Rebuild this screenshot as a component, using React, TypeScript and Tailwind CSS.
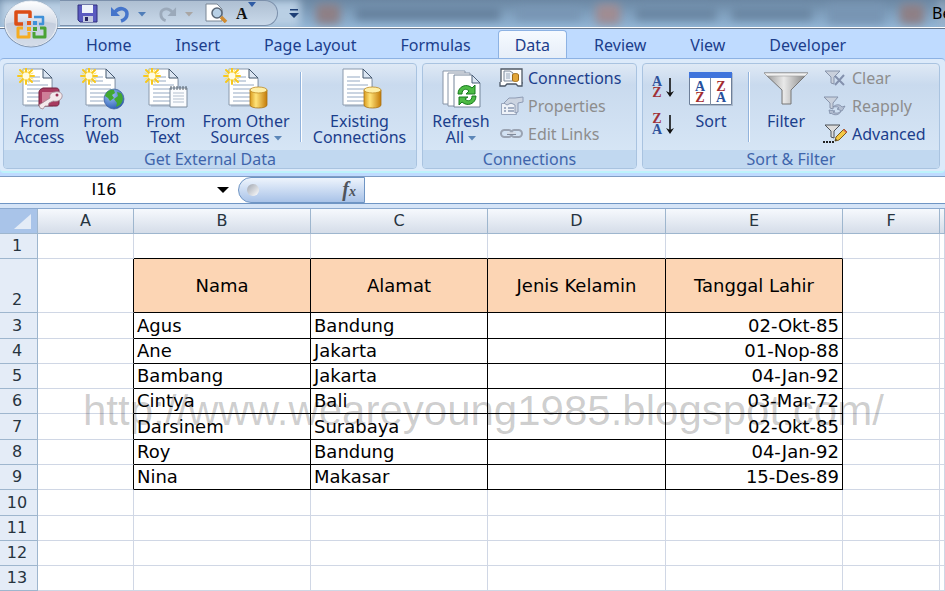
import { useState, type ReactNode } from "react";

const tabs = ["Home", "Insert", "Page Layout", "Formulas", "Data", "Review", "View", "Developer"];

const columns = [
  { name: "A", width: "w-24" },
  { name: "B", width: "w-[177px]" },
  { name: "C", width: "w-[177px]" },
  { name: "D", width: "w-[178px]" },
  { name: "E", width: "w-[177px]" },
  { name: "F", width: "w-[97px]" },
  { name: "", width: "" },
];

const headings = ["Nama", "Alamat", "Jenis Kelamin", "Tanggal Lahir"];

const people = [
  ["Agus", "Bandung", "", "02-Okt-85"],
  ["Ane", "Jakarta", "", "01-Nop-88"],
  ["Bambang", "Jakarta", "", "04-Jan-92"],
  ["Cintya", "Bali", "", "03-Mar-72"],
  ["Darsinem", "Surabaya", "", "02-Okt-85"],
  ["Roy", "Bandung", "", "04-Jan-92"],
  ["Nina", "Makasar", "", "15-Des-89"],
];

// row heights in pixels, the first entry is row 1
const rowHeights = [25, 54, 26, 25, 25, 25, 26, 25, 25, 26, 25, 25, 25];

function cellText(row: number, col: number) {
  if (col < 1 || col > 4) return "";
  if (row === 2) return headings[col - 1];
  return people[row - 3]?.[col - 1] ?? "";
}

function cellClass(row: number, col: number) {
  const inCols = col >= 1 && col <= 4;
  const inRows = row >= 2 && row <= 9;
  const right = inRows && col <= 4 ? "border-r-black" : "border-r-[#d0d7e5]";
  const bottom = inCols && row <= 9 ? "border-b-black" : "border-b-[#d0d7e5]";
  let look = "text-left";
  if (row === 2 && inCols) look = "bg-[#fcd5b4] text-center";
  else if (col === 4) look = "text-right";
  return `overflow-hidden whitespace-nowrap border-r border-b px-[3px] py-0 ${right} ${bottom} ${look}`;
}

function Caret({ color = "#5b86b8" }: { color?: string }) {
  return (
    <svg width="8" height="5" viewBox="0 0 8 5" className="inline-block">
      <path d="M0 0h8L4 4.5z" fill={color} />
    </svg>
  );
}

function Page() {
  return (
    <g>
      <path d="M7 2h19l9 9v27H7z" fill="#8a97a8" opacity=".35" transform="translate(1 1)" />
      <path d="M6 1h20l9 9v27H6z" fill="#fff" stroke="#8b9aad" />
      <path d="M26 1v9h9z" fill="#dce6f2" stroke="#45586f" strokeLinejoin="round" />
      <path d="M10 9h13M10 13h13M10 17h21M10 21h21M10 25h21M10 29h21M10 33h21" stroke="#b9c6d8" strokeWidth="1.3" />
    </g>
  );
}

function Spark() {
  return (
    <g strokeLinecap="round">
      <path d="M9 0v16M1 8h16M3 2l12 12M15 2L3 14" stroke="#f8c81c" strokeWidth="2" />
      <path d="M6 1l6 14M12 1L6 15M2 5l14 6M16 5L2 11" stroke="#fbe26a" strokeWidth="1" />
      <circle cx="9" cy="8" r="3.4" fill="#fffbe0" />
    </g>
  );
}

function Cylinder() {
  return (
    <g>
      <path d="M27 22v15c0 4 17 4 17 0V22z" fill="url(#gold)" stroke="#a8741a" strokeWidth=".8" />
      <ellipse cx="35.500" cy="22" rx="8.500" ry="3" fill="#fff0a8" stroke="#c08c22" strokeWidth=".8" />
    </g>
  );
}

function BigIcon({ children }: { children: ReactNode }) {
  return (
    <svg width="46" height="42" viewBox="0 0 46 42" className="shrink-0">
      {children}
    </svg>
  );
}

function AccessIcon() {
  return (
    <BigIcon>
      <Page />
      <Spark />
      <path d="M22 24c0-2 2-3 4-4h13c2 0 3 1 3 3v12c0 2-1 3-3 3H22z" fill="#a83a60" stroke="#74203d" />
      <path d="M25 24h11v10H25z" fill="#cf7f98" />
      <path d="M22 37l1 3 3 1 2-3 3 0 1-3 4-2c5 1 8-1 9-4 1-4-3-6-7-5-4 0-6 3-5 6z" fill="#f4e9ec" stroke="#a08790" strokeWidth=".8" />
      <circle cx="40" cy="27" r="1.500" fill="#9b2f55" />
    </BigIcon>
  );
}

function WebIcon() {
  return (
    <BigIcon>
      <Page />
      <Spark />
      <circle cx="34" cy="31" r="10" fill="url(#globe)" stroke="#3c5f9c" strokeWidth=".7" />
      <path d="M25 28c1-4 5-7 9-6l1 3-3 2 2 3-4 3-2-3zM34 31l4-3-1-4 4 1c3 4 2 9-1 12l-4 2 1-4z" fill="#42a832" />
    </BigIcon>
  );
}

function TextIcon() {
  return (
    <BigIcon>
      <Page />
      <Spark />
      <path d="M27 20h17v19H27z" fill="#fbfcfe" stroke="#7d8c9e" />
      <path d="M28 18v4M31 18v4M34 18v4M37 18v4M40 18v4M43 18v4" stroke="#55606c" />
      <path d="M30 25h11M30 28h11M30 31h11M30 34h11" stroke="#b3bfce" />
    </BigIcon>
  );
}

function OtherIcon() {
  return (
    <BigIcon>
      <Page />
      <Spark />
      <Cylinder />
    </BigIcon>
  );
}

function ExistingIcon() {
  return (
    <BigIcon>
      <Page />
      <Cylinder />
    </BigIcon>
  );
}

function RefreshIcon() {
  return (
    <BigIcon>
      <path d="M5 3h22v33H5z" fill="#fff" stroke="#8794a6" />
      <path d="M10 5h22v33H10z" fill="#fff" stroke="#8794a6" />
      <path d="M16 7h18l8 8v24H16z" fill="#fff" stroke="#74859a" />
      <path d="M34 7v8h8z" fill="#dce6f2" stroke="#4b5f78" />
      <path d="M20 26c0-8 9-11 14-6l3-3v9h-9l3-3c-3-3-7-2-7 3z" fill="#4dbb44" stroke="#167a1d" />
      <path d="M38 28c0 8-9 11-14 6l-3 3v-8h9l-3 2c3 3 7 2 7-3z" fill="#4dbb44" stroke="#167a1d" />
    </BigIcon>
  );
}

function SortDialogIcon() {
  return (
    <BigIcon>
      <path d="M2 5h43v33H2z" fill="#8b98a8" opacity=".5" />
      <path d="M1.500 4.500h42v32h-42z" fill="#fff" stroke="#6d7f99" />
      <path d="M1 4h43v6H1z" fill="#3f74dc" />
      <path d="M22.500 10v27" stroke="#7f8da1" />
      <g fontFamily="Liberation Serif, serif" fontSize="14" fontWeight="bold" textAnchor="middle">
        <text x="12" y="23" fill="#27509c">A</text>
        <text x="12" y="34" fill="#a32c30">Z</text>
        <text x="33" y="23" fill="#a32c30">Z</text>
        <text x="33" y="34" fill="#27509c">A</text>
      </g>
    </BigIcon>
  );
}

function FilterIcon() {
  return (
    <BigIcon>
      <path d="M1 5h44L28 22v14h-9V22z" fill="url(#metal)" stroke="#777" />
      <path d="M1 5h44l-3 3H4z" fill="#f1f1f1" stroke="#9b9b9b" strokeWidth=".6" />
    </BigIcon>
  );
}

function SortOrderIcon({ first, second }: { first: string; second: string }) {
  const color = (letter: string) => (letter === "A" ? "#2f529b" : "#a03038");
  return (
    <svg width="24" height="25" viewBox="0 0 24 25">
      <g fontFamily="Liberation Serif, serif" fontSize="14" fontWeight="bold" textAnchor="middle">
        <text x="6" y="11" fill={color(first)}>{first}</text>
        <text x="6" y="22" fill={color(second)}>{second}</text>
      </g>
      <path d="M19 3v16" stroke="#111" strokeWidth="1.600" />
      <path d="M15 16l4 6 4-6-4 2z" fill="#111" />
    </svg>
  );
}

function SmallIcon({ children }: { children: ReactNode }) {
  return (
    <svg width="25" height="20" viewBox="0 0 25 20" className="shrink-0">
      {children}
    </svg>
  );
}

function ConnectionsIcon() {
  return (
    <SmallIcon>
      <path d="M2 1h21v14H2z" fill="#fff" stroke="#4f5864" strokeWidth="1.300" />
      <path d="M5 3h6l3 2v8H5z" fill="#f1f5fa" stroke="#7b8797" />
      <path d="M7 6h4M7 8h4M7 10h4" stroke="#97a7ba" />
      <path d="M13.500 7v5c0 2 6 2 6 0V7c0-2-6-2-6 0z" fill="#e2a63a" stroke="#9b6a1a" />
      <path d="M1 14v4h5l2-2h9l2 2h4v-4" fill="#fff" stroke="#4b5766" strokeWidth="1.300" />
    </SmallIcon>
  );
}

function PropertiesIcon() {
  return (
    <SmallIcon>
      <path d="M2.500 7.500h15v11h-15z" fill="#eef2f8" stroke="#9aa7bd" />
      <path d="M5 12h2M5 15h2M9 12h6M9 15h6" stroke="#8b99b3" strokeWidth="1.500" />
      <path d="M5 7l5-5h6l8-1v5l-5 1v9l-3 1V9l-4-2-4 2z" fill="#ccd4e1" stroke="#8f9cb4" />
    </SmallIcon>
  );
}

function LinksIcon() {
  return (
    <SmallIcon>
      <g fill="none" stroke="#9aa3b2" strokeWidth="2">
        <rect x="2" y="6" width="11" height="7" rx="3.500" />
        <rect x="12" y="6" width="11" height="7" rx="3.500" />
      </g>
      <path d="M8 9.500h9" stroke="#d5dbe5" strokeWidth="2.400" />
      <path d="M8 10.500h9" stroke="#808b9d" />
    </SmallIcon>
  );
}

function ClearIcon() {
  return (
    <SmallIcon>
      <path d="M2 3h15l-6 6v7l-3-1V9z" fill="#c9d0dc" stroke="#8793aa" />
      <path d="M12 8l9 9M21 7l-9 10" stroke="#8491ad" strokeWidth="2" />
    </SmallIcon>
  );
}

function ReapplyIcon() {
  return (
    <SmallIcon>
      <path d="M1 1h14l-5 6v6l-3-1V7z" fill="#c9d0dc" stroke="#8793aa" />
      <path d="M10 11c3-3 7-3 9 0l3-1-3 5-5-2 2-1c-2-2-4-1-6-1zM6 14l6 1-2 1c3 2 6 1 8-1-1 4-7 5-10 2l-1 1z" fill="#b4bfd2" stroke="#7e8ba6" strokeWidth=".8" />
    </SmallIcon>
  );
}

function AdvancedIcon() {
  return (
    <SmallIcon>
      <path d="M2 1h15l-6 6v7l-3-1V7z" fill="#dcdcdc" stroke="#4d5258" />
      <path d="M0 18h12" stroke="#222" strokeWidth="2" strokeDasharray="2 1" />
      <path d="M12 17l1-4 8-8 3 3-8 8z" fill="#f3c845" stroke="#7c5b19" />
      <path d="M20 6l1-1 3 3-1 1z" fill="#d7634f" />
      <path d="M12 17l1-2 1 1z" fill="#222" />
    </SmallIcon>
  );
}

function BigButton({ icon, top, bottom, caret, width }: { icon: ReactNode; top: string; bottom?: string; caret?: boolean; width: string }) {
  return (
    <button className={`flex flex-col items-center gap-[3px] pt-1 text-[#1b3e8c] ${width}`}>
      {icon}
      <span className="text-center leading-4 whitespace-nowrap">
        {top}
        {bottom && <br />}
        {bottom}
        {caret && (
          <span className="ml-1 inline-flex align-middle">
            <Caret />
          </span>
        )}
      </span>
    </button>
  );
}

function SmallButton({ icon, label, disabled }: { icon: ReactNode; label: string; disabled?: boolean }) {
  return (
    <button
      disabled={disabled}
      className="flex h-7 items-center gap-1 whitespace-nowrap text-[#1b3e8c] disabled:text-[#8d8d8d]"
    >
      {icon}
      {label}
    </button>
  );
}

function Divider() {
  return <div className="mx-[5px] my-2 w-[2px] border-r border-r-white bg-[#92b3dc]" />;
}

function Group({ title, children }: { title: string; children: ReactNode }) {
  return (
    <section className="flex shrink-0 flex-col overflow-hidden rounded border border-[#a9c3e0] bg-linear-to-b from-[#dfe9f5] via-[#c9daee] via-20% to-[#d9e8f7]">
      <div className="flex h-[86px] px-1">{children}</div>
      <h2 className="h-[18px] bg-[#c1d8f0] text-center leading-[18px] text-[#3f65ab]">{title}</h2>
    </section>
  );
}

function OfficeButton() {
  return (
    <button aria-label="Office Button" className="absolute top-0 left-1 z-10">
      <svg width="55" height="48" viewBox="0 0 55 48">
        <ellipse cx="27" cy="24" rx="27" ry="23.500" fill="#67788f" opacity=".7" />
        <ellipse cx="27" cy="23.500" rx="26" ry="22.500" fill="url(#orb)" stroke="#eef3f9" />
        <path d="M2 24c10-4 40-4 50 0-1 13-12 22-25 22S3 37 2 24z" fill="#b5c2d6" opacity=".5" />
        <g fill="none" strokeLinejoin="round">
          <path d="M26 18v-6H12v12h7" stroke="#dc4e16" strokeWidth="3.500" />
          <path d="M30 17h9v7h-4" stroke="#3f91d8" strokeWidth="2.500" />
          <path d="M19 28h-5v9h11v-5" stroke="#f5ac21" strokeWidth="3" />
          <path d="M30 32v5h11v-9h-5" stroke="#4ba335" strokeWidth="3" />
        </g>
        <path d="M23 21h4v4h-4z" fill="#e3581d" />
        <path d="M29 21h4v4h-4z" fill="#3f91d8" />
        <path d="M23 27h4v4h-4z" fill="#f5ac21" />
        <path d="M29 27h4v4h-4z" fill="#4ba335" />
      </svg>
    </button>
  );
}

function QuickAccess() {
  return (
    <div className="ml-[60px] flex h-[26px] w-[218px] shrink-0 items-center rounded-r-full border border-l-0 border-[#7c90ab] bg-linear-to-b from-[#aebfd2] to-[#c9d9ea] pl-[17px]">
      <button aria-label="Save">
        <svg width="21" height="20" viewBox="0 0 21 20">
          <path d="M1 2h19v17H3l-2-2z" fill="#5a5ac0" stroke="#30307f" />
          <path d="M5 2h11v8H5z" fill="#eef3fb" />
          <path d="M6 13h10v6H6z" fill="#c4cbe0" />
          <path d="M8 14h3v4H8z" fill="#262660" />
        </svg>
      </button>
      <button aria-label="Undo" className="ml-3">
        <svg width="20" height="19" viewBox="0 0 20 19">
          <path d="M5 8c5-6 12-3 12 2 0 4-3 6-6 7" fill="none" stroke="#4575cb" strokeWidth="3.500" />
          <path d="M1 3v9h9z" fill="#4575cb" />
        </svg>
      </button>
      <button aria-label="Undo list" className="ml-2">
        <Caret color="#4f7db8" />
      </button>
      <button aria-label="Redo" className="ml-3" disabled>
        <svg width="19" height="19" viewBox="0 0 20 19">
          <path d="M15 8C10 2 3 5 3 10c0 4 2 6 5 7" fill="none" stroke="#9ba9ba" strokeWidth="3" />
          <path d="M19 3v9h-9z" fill="#9ba9ba" />
        </svg>
      </button>
      <button aria-label="Redo list" className="ml-2" disabled>
        <Caret color="#a9a6a4" />
      </button>
      <button aria-label="Print Preview" className="ml-3">
        <svg width="23" height="20" viewBox="0 0 23 20">
          <path d="M1 1h11l5 5v12H1z" fill="#fff" stroke="#7b8795" />
          <circle cx="12" cy="10" r="5" fill="#b7d0e6" stroke="#596676" strokeWidth="1.500" />
          <path d="M16 14l5 5" stroke="#cf8b31" strokeWidth="3.500" />
        </svg>
      </button>
      <button aria-label="Shrink Font" className="ml-2 flex items-start font-['Liberation_Serif',serif] font-bold text-[#111]">
        <span className="pt-[2px]">A</span>
        <svg width="8" height="7" viewBox="0 0 8 7">
          <path d="M0 2h8L4 7z" fill="#2f5ba4" />
        </svg>
      </button>
    </div>
  );
}

function TitleBar() {
  return (
    <header className="relative flex h-7 items-start overflow-hidden border-b border-b-white bg-linear-to-b from-[#6c88a4] to-[#92b5d5]">
      <div className="absolute inset-0 flex items-center gap-4 blur-[4px]">
        <div className="h-full w-[300px] bg-[#b9cfe4]" />
        <div className="h-5 w-6 rounded bg-[#8e7f85]" />
        <div className="h-3 w-36 bg-[#65809c]" />
        <div className="h-3 w-16 bg-[#7895b3]" />
        <div className="h-5 w-6 rounded bg-[#a08c92]" />
        <div className="h-3 w-20 bg-[#6985a1]" />
        <div className="h-3 w-20 bg-[#6985a1]" />
        <div className="h-5 w-14 bg-[#7895b3]" />
        <div className="h-5 w-6 rounded bg-[#8e7f85]" />
        <div className="h-full flex-1 bg-[#a9b8c9]" />
      </div>
      <div className="relative flex min-w-0 flex-1">
        <QuickAccess />
        <button aria-label="Customize Quick Access Toolbar" className="ml-[11px]">
          <svg width="10" height="9" viewBox="0 0 10 9">
            <path d="M1 0h8v1.500H1zM0 4h10L5 9z" fill="#1f4076" />
          </svg>
        </button>
      </div>
      <h1 className="relative w-[13px] overflow-hidden leading-[26px] text-black">Be</h1>
    </header>
  );
}

function Ribbon() {
  const [active, setActive] = useState("Data");

  return (
    <div className="border-b border-b-[#7f9dc4] bg-[#bfdbff] pb-[3px]">
      <nav className="flex h-[30px] items-end gap-[10px] border-t border-t-[#66788f] pl-[69px]">
        {tabs.map((tab) => (
          <button
            key={tab}
            onClick={() => setActive(tab)}
            className={`h-7 rounded-t border border-b-0 px-4 whitespace-nowrap text-[#1b3e8c] ${
              tab === active ? "border-[#8db2e3] bg-linear-to-b from-[#f6faff] to-[#e6eef8]" : "border-transparent"
            }`}
          >
            {tab}
          </button>
        ))}
      </nav>
      <div className="flex gap-[5px] overflow-hidden rounded border-t border-b-2 border-t-[#8db2e3] border-b-[#bdf3fb] bg-[#dceafa] px-[3px] pt-1 pb-[2px]">
        <Group title="Get External Data">
          <BigButton icon={<AccessIcon />} top="From" bottom="Access" width="w-[63px]" />
          <BigButton icon={<WebIcon />} top="From" bottom="Web" width="w-[63px]" />
          <BigButton icon={<TextIcon />} top="From" bottom="Text" width="w-[63px]" />
          <BigButton icon={<OtherIcon />} top="From Other" bottom="Sources" caret width="w-[98px]" />
          <Divider />
          <BigButton icon={<ExistingIcon />} top="Existing" bottom="Connections" width="w-[105px]" />
        </Group>
        <Group title="Connections">
          <BigButton icon={<RefreshIcon />} top="Refresh" bottom="All" caret width="w-[68px]" />
          <div className="flex w-[137px] flex-col pl-1">
            <SmallButton icon={<ConnectionsIcon />} label="Connections" />
            <SmallButton icon={<PropertiesIcon />} label="Properties" disabled />
            <SmallButton icon={<LinksIcon />} label="Edit Links" disabled />
          </div>
        </Group>
        <Group title="Sort & Filter">
          <div className="flex w-8 flex-col items-center gap-3 pt-[11px]">
            <button aria-label="Sort A to Z">
              <SortOrderIcon first="A" second="Z" />
            </button>
            <button aria-label="Sort Z to A">
              <SortOrderIcon first="Z" second="A" />
            </button>
          </div>
          <BigButton icon={<SortDialogIcon />} top="Sort" width="w-16" />
          <Divider />
          <BigButton icon={<FilterIcon />} top="Filter" width="w-[62px]" />
          <div className="flex w-[118px] flex-col pl-[6px]">
            <SmallButton icon={<ClearIcon />} label="Clear" disabled />
            <SmallButton icon={<ReapplyIcon />} label="Reapply" disabled />
            <SmallButton icon={<AdvancedIcon />} label="Advanced" />
          </div>
        </Group>
        <div className="flex-1 rounded-l border border-r-0 border-[#a9c3e0] bg-[#d2e1f2]" />
      </div>
    </div>
  );
}

function FormulaBar() {
  return (
    <div className="flex h-[27px] border-b border-b-[#6f95c4] bg-white font-['DejaVu_Sans',sans-serif] text-base">
      <input aria-label="Name Box" defaultValue="I16" className="w-[208px] text-center text-black outline-none" />
      <button aria-label="Name list" className="flex w-[30px] items-center justify-center">
        <svg width="12" height="6" viewBox="0 0 12 6">
          <path d="M0 0h12L6 6z" fill="#000" />
        </svg>
      </button>
      <div className="flex w-[127px] items-center justify-between rounded-l-full border border-[#6f95c4] bg-linear-to-b from-[#eef4fc] to-[#a9c3e8] pr-2 pl-2">
        <span className="size-3 rounded-full bg-linear-to-br from-[#a0a6b0] to-white" />
        <button aria-label="Insert Function" className="font-['Liberation_Serif',serif] text-xl leading-5 font-bold text-[#4f545c] italic">
          f<span className="text-sm">x</span>
        </button>
      </div>
      <input aria-label="Formula" className="min-w-0 flex-1 px-1 outline-none" />
    </div>
  );
}

function Sheet() {
  return (
    <main className="relative overflow-hidden border-t border-t-[#8ba9cf] font-['DejaVu_Sans',sans-serif] text-lg leading-6 text-black">
      <table className="w-full table-fixed border-separate border-spacing-0">
        <colgroup>
          <col className="w-[38px]" />
          {columns.map((col, i) => (
            <col key={i} className={col.width} />
          ))}
        </colgroup>
        <thead>
          <tr className="h-[25px] text-base">
            <th className="border-r border-b border-[#9eb6ce] bg-[#a9c4e9] p-0">
              <button aria-label="Select All" className="flex h-6 w-full items-end justify-end pr-[6px] pb-1">
                <svg width="17" height="15" viewBox="0 0 17 15">
                  <path d="M17 0v15H0z" fill="#e4ecf7" />
                </svg>
              </button>
            </th>
            {columns.map((col, i) => (
              <th
                key={i}
                className="border-r border-b border-[#9eb6ce] bg-linear-to-b from-[#f6f9fd] to-[#d5dde9] p-0 font-normal text-[#27343f]"
              >
                {col.name}
              </th>
            ))}
          </tr>
        </thead>
        <tbody>
          {rowHeights.map((height, i) => (
            <tr key={i} style={{ height }}>
              <th className="border-r border-b border-[#9eb6ce] bg-[#e4ecf7] p-0 pr-[3px] align-bottom text-base leading-6 font-normal text-[#27343f]">
                {i + 1}
              </th>
              {columns.map((_, col) => (
                <td key={col} className={cellClass(i + 1, col)}>
                  {cellText(i + 1, col)}
                </td>
              ))}
            </tr>
          ))}
        </tbody>
      </table>
      <p className="pointer-events-none absolute top-[162px] left-[83px] font-['Liberation_Sans',sans-serif] text-[42px] leading-[80px] whitespace-nowrap text-black/20">
        http://www.weareyoung1985.blogspot.com/
      </p>
    </main>
  );
}

export default function App() {
  return (
    <div className="relative min-h-screen overflow-hidden bg-white font-['Noto_Sans',sans-serif] text-base leading-6">
      <svg className="absolute size-0">
        <defs>
          <linearGradient id="gold">
            <stop offset="0" stopColor="#d99a1c" />
            <stop offset=".35" stopColor="#ffe47a" />
            <stop offset="1" stopColor="#c47a08" />
          </linearGradient>
          <linearGradient id="metal">
            <stop offset="0" stopColor="#8f8f8f" />
            <stop offset=".45" stopColor="#e9e9e9" />
            <stop offset="1" stopColor="#7d7d7d" />
          </linearGradient>
          <radialGradient id="globe" cx=".35" cy=".3" r=".8">
            <stop offset="0" stopColor="#9fc6f5" />
            <stop offset="1" stopColor="#2456b0" />
          </radialGradient>
          <linearGradient id="orb" x2="0" y2="1">
            <stop offset="0" stopColor="#ffffff" />
            <stop offset=".5" stopColor="#d3dbe7" />
            <stop offset="1" stopColor="#f4f8fc" />
          </linearGradient>
        </defs>
      </svg>
      <OfficeButton />
      <TitleBar />
      <Ribbon />
      <div className="bg-[#d5e4f7] pb-1">
        <FormulaBar />
      </div>
      <Sheet />
    </div>
  );
}
